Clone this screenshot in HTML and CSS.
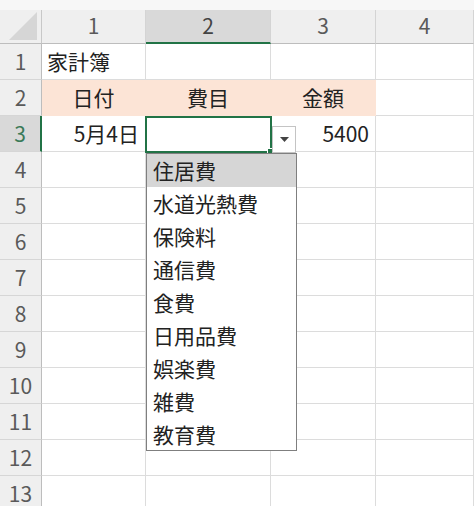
FILE: index.html
```html
<!DOCTYPE html>
<html lang="ja">
<head>
<meta charset="utf-8">
<title>家計簿</title>
<link rel="stylesheet" href="styles.css">
</head>
<body>
<div class="top"></div>
<div class="sheet">
  <div class="corner"><svg width="32" height="32" viewBox="0 0 32 32"><polygon points="2,30 30,30 30,2" fill="#d6d6d6"/></svg></div>
  <div class="ch">1</div>
  <div class="ch sel">2</div>
  <div class="ch">3</div>
  <div class="ch">4</div>

  <div class="rh">1</div>
  <div class="c left">家計簿</div><div class="c"></div><div class="c"></div><div class="c"></div>

  <div class="rh">2</div>
  <div class="c fill center">日付</div><div class="c fill center">費目</div><div class="c fill center">金額</div><div class="c"></div>

  <div class="rh sel">3</div>
  <div class="c right">5月4日</div><div class="c"></div><div class="c right">5400</div><div class="c"></div>

  <div class="rh">4</div><div class="c"></div><div class="c"></div><div class="c"></div><div class="c"></div>
  <div class="rh">5</div><div class="c"></div><div class="c"></div><div class="c"></div><div class="c"></div>
  <div class="rh">6</div><div class="c"></div><div class="c"></div><div class="c"></div><div class="c"></div>
  <div class="rh">7</div><div class="c"></div><div class="c"></div><div class="c"></div><div class="c"></div>
  <div class="rh">8</div><div class="c"></div><div class="c"></div><div class="c"></div><div class="c"></div>
  <div class="rh">9</div><div class="c"></div><div class="c"></div><div class="c"></div><div class="c"></div>
  <div class="rh">10</div><div class="c"></div><div class="c"></div><div class="c"></div><div class="c"></div>
  <div class="rh">11</div><div class="c"></div><div class="c"></div><div class="c"></div><div class="c"></div>
  <div class="rh">12</div><div class="c"></div><div class="c"></div><div class="c"></div><div class="c"></div>
  <div class="rh">13</div><div class="c"></div><div class="c"></div><div class="c"></div><div class="c"></div>

  <div class="selbox"><span class="handle"></span></div>
  <div class="ddbtn"><svg width="9" height="5" viewBox="0 0 9 5"><polygon points="0,0 9,0 4.5,5" fill="#444"/></svg></div>
  <ul class="list">
    <li class="hl">住居費</li>
    <li>水道光熱費</li>
    <li>保険料</li>
    <li>通信費</li>
    <li>食費</li>
    <li>日用品費</li>
    <li>娯楽費</li>
    <li>雑費</li>
    <li>教育費</li>
  </ul>
</div>
</body>
</html>
```

FILE: styles.css
```css
html, body {
  margin: 0;
  padding: 0;
  background: #ffffff;
  overflow: hidden;
}
body {
  font-family: "Noto Sans CJK JP", "Noto Sans", sans-serif;
  font-size: 21px;
  color: #222222;
}
.top {
  height: 10px;
  background: #f7f7f7;
}
.sheet {
  position: relative;
  display: grid;
  grid-template-columns: 42px 104px 125px 105px 98px;
  grid-template-rows: 34px repeat(13, 36px);
}
.corner {
  background: #efefef;
  border-right: 1px solid #c8c8c8;
  border-bottom: 1px solid #bdbdbd;
  box-sizing: border-box;
  display: flex;
  align-items: flex-end;
  justify-content: flex-end;
  padding: 0 2px 1px 0;
}
.corner svg { display: block; }
.ch {
  background: #efefef;
  border-right: 1px solid #d4d4d4;
  border-bottom: 1px solid #bdbdbd;
  box-sizing: border-box;
  display: flex;
  align-items: center;
  justify-content: center;
  color: #5a5a5a;
  line-height: 1;
  padding-bottom: 2px;
}
.ch.sel {
  background: #d9d9d9;
  border-bottom: 2px solid #217346;
  color: #444444;
}
.rh {
  background: #efefef;
  border-right: 1px solid #bdbdbd;
  border-bottom: 1px solid #d6d6d6;
  box-sizing: border-box;
  display: flex;
  align-items: center;
  justify-content: center;
  color: #5a5a5a;
  line-height: 1;
}
.rh.sel {
  background: #d9d9d9;
  border-right: 2px solid #217346;
  color: #3b7a58;
}
.c {
  border-right: 1px solid #dcdcdc;
  border-bottom: 1px solid #dcdcdc;
  box-sizing: border-box;
  display: flex;
  align-items: center;
  line-height: 1;
  white-space: nowrap;
}
.c.left { padding-left: 5px; }
.c.center { justify-content: center; }
.c.right { justify-content: flex-end; padding-right: 6px; }
.c.fill {
  background: #fce4d6;
  border-color: #fce4d6;
}
.selbox {
  position: absolute;
  left: 145px;
  top: 106px;
  width: 127px;
  height: 37px;
  border: 2px solid #217346;
  box-sizing: border-box;
}
.handle {
  position: absolute;
  right: -5px;
  bottom: -5px;
  width: 6px;
  height: 6px;
  background: #217346;
  border: 1px solid #ffffff;
}
.ddbtn {
  position: absolute;
  left: 272px;
  top: 116px;
  width: 24px;
  height: 27px;
  background: #ffffff;
  border: 1px solid #c4c4c4;
  box-sizing: border-box;
  display: flex;
  align-items: center;
  justify-content: center;
}
.ddbtn svg { display: block; }
.list {
  position: absolute;
  left: 146px;
  top: 143px;
  width: 151px;
  height: 298px;
  margin: 0;
  padding: 0;
  list-style: none;
  background: #ffffff;
  border: 1px solid #7f7f7f;
  box-sizing: border-box;
}
.list li {
  height: 33px;
  display: flex;
  align-items: center;
  padding-left: 6px;
  line-height: 1;
  color: #222222;
  white-space: nowrap;
}
.list li.hl {
  background: #d6d6d6;
}
```
